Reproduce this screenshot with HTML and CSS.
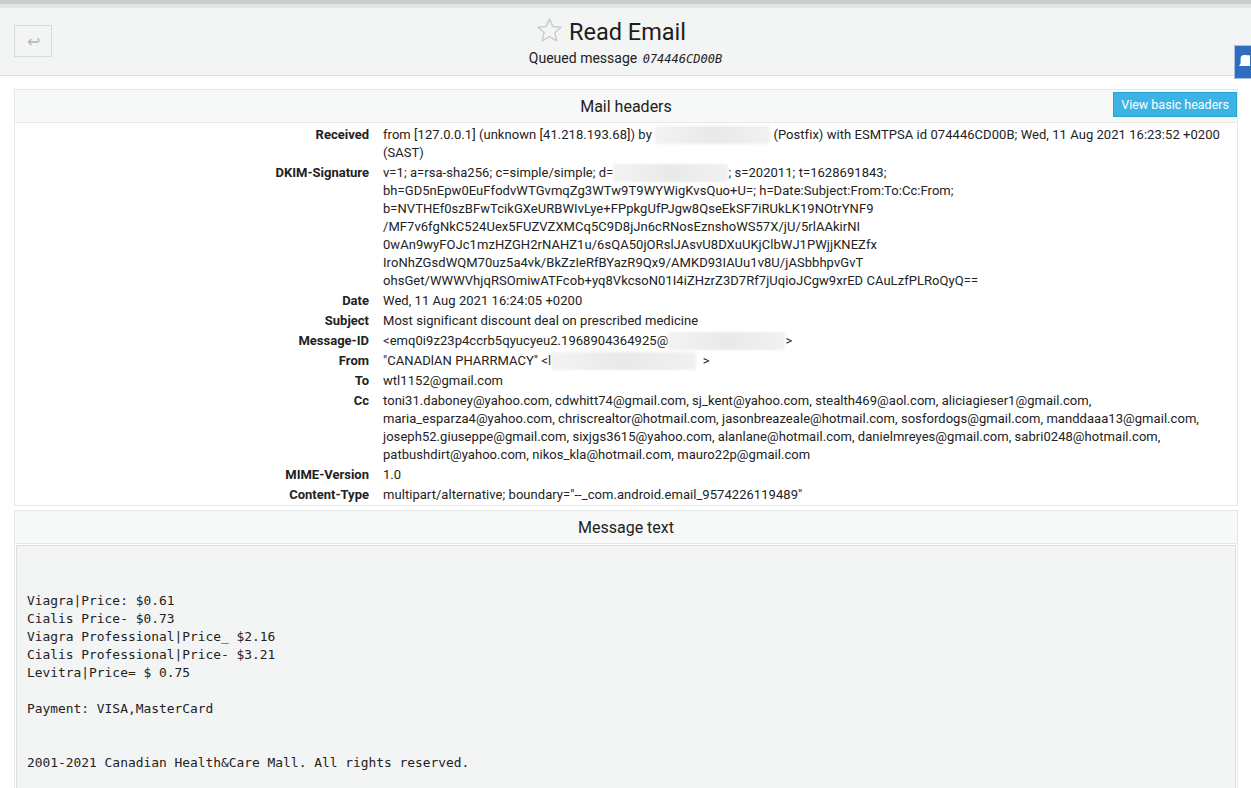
FILE: index.html
```html
<!DOCTYPE html>
<html lang="en">
<head>
  <meta charset="UTF-8">
  <meta name="viewport" content="width=device-width, initial-scale=1.0">
  <title>Read Email</title>
  <link rel="stylesheet" href="styles.css">
</head>
<body>
  <div class="top-strip"></div>
  <div class="page-header">
    <button class="back-btn">&#8617;</button>
    <div class="title-block">
      <h1 class="title">
        <svg class="star" width="29" height="29" viewBox="0 0 24 24"><path d="M12 2.4l2.8 6.3 6.8.6-5.2 4.5 1.6 6.7L12 17l-6 3.5 1.6-6.7-5.2-4.5 6.8-.6z" fill="none" stroke="#c9cbcc" stroke-width="1.2" stroke-linejoin="round"/></svg>
        Read Email
      </h1>
      <div class="subtitle">Queued message <span class="qid">074446CD00B</span></div>
    </div>
  </div>
  <div class="side-tab">
    <svg width="16" height="32" viewBox="0 0 16 32"><path d="M9 9c-2.2 0-3.4 1.7-3.4 3.8v4.4L4 20h11V9.5C14 9.2 11 9 9 9z" fill="#fff"/></svg>
  </div>

  <div class="content">
    <div class="panel">
      <div class="panel-head">
        <span class="panel-title">Mail headers</span>
        <button class="btn-info">View basic headers</button>
      </div>
      <div class="headers">
        <div class="h-label">Received</div>
        <div class="h-value">from [127.0.0.1] (unknown [41.218.193.68]) by <span class="redact" style="width:115px"></span> (Postfix) with ESMTPSA id 074446CD00B; Wed, 11 Aug 2021 16:23:52 +0200 (SAST)</div>

        <div class="h-label">DKIM-Signature</div>
        <div class="h-value">v=1; a=rsa-sha256; c=simple/simple; d=<span class="redact" style="width:115px"></span>; s=202011; t=1628691843;<br>bh=GD5nEpw0EuFfodvWTGvmqZg3WTw9T9WYWigKvsQuo+U=; h=Date:Subject:From:To:Cc:From;<br>b=NVTHEf0szBFwTcikGXeURBWIvLye+FPpkgUfPJgw8QseEkSF7iRUkLK19NOtrYNF9<br>/MF7v6fgNkC524Uex5FUZVZXMCq5C9D8jJn6cRNosEznshoWS57X/jU/5rlAAkirNI<br>0wAn9wyFOJc1mzHZGH2rNAHZ1u/6sQA50jORslJAsvU8DXuUKjClbWJ1PWjjKNEZfx<br>IroNhZGsdWQM70uz5a4vk/BkZzIeRfBYazR9Qx9/AMKD93IAUu1v8U/jASbbhpvGvT<br>ohsGet/WWWVhjqRSOmiwATFcob+yq8VkcsoN01I4iZHzrZ3D7Rf7jUqioJCgw9xrED CAuLzfPLRoQyQ==</div>

        <div class="h-label">Date</div>
        <div class="h-value">Wed, 11 Aug 2021 16:24:05 +0200</div>

        <div class="h-label">Subject</div>
        <div class="h-value">Most significant discount deal on prescribed medicine</div>

        <div class="h-label">Message-ID</div>
        <div class="h-value">&lt;emq0i9z23p4ccrb5qyucyeu2.1968904364925@<span class="redact" style="width:117px"></span>&gt;</div>

        <div class="h-label">From</div>
        <div class="h-value">"CANADlAN PHARRMACY" &lt;l<span class="redact" style="width:145px"></span>&nbsp; &gt;</div>

        <div class="h-label">To</div>
        <div class="h-value">wtl1152@gmail.com</div>

        <div class="h-label">Cc</div>
        <div class="h-value">toni31.daboney@yahoo.com, cdwhitt74@gmail.com, sj_kent@yahoo.com, stealth469@aol.com, aliciagieser1@gmail.com,<br>maria_esparza4@yahoo.com, chriscrealtor@hotmail.com, jasonbreazeale@hotmail.com, sosfordogs@gmail.com, manddaaa13@gmail.com,<br>joseph52.giuseppe@gmail.com, sixjgs3615@yahoo.com, alanlane@hotmail.com, danielmreyes@gmail.com, sabri0248@hotmail.com,<br>patbushdirt@yahoo.com, nikos_kla@hotmail.com, mauro22p@gmail.com</div>

        <div class="h-label">MIME-Version</div>
        <div class="h-value">1.0</div>

        <div class="h-label">Content-Type</div>
        <div class="h-value">multipart/alternative; boundary="--_com.android.email_9574226119489"</div>
      </div>
    </div>

    <div class="panel">
      <div class="panel-head">
        <span class="panel-title">Message text</span>
      </div>
      <pre class="message">


Viagra|Price: $0.61
Cialis Price- $0.73
Viagra Professional|Price_ $2.16
Cialis Professional|Price- $3.21
Levitra|Price= $ 0.75

Payment: VISA,MasterCard


2001-2021 Canadian Health&amp;Care Mall. All rights reserved.
</pre>
    </div>
  </div>
</body>
</html>
```

FILE: styles.css
```css
body {
  margin: 0;
  background: #fff;
  font-family: Roboto, "Liberation Sans", sans-serif;
  font-size: 13px;
  color: #222;
}
.top-strip {
  height: 4px;
  background: #cbcccc;
  border-bottom: 4px solid #e4e5e5;
}
.page-header {
  position: relative;
  height: 67px;
  background: #f3f4f4;
  border-bottom: 1px solid #dcdddd;
}
.back-btn {
  position: absolute;
  left: 14px;
  top: 17px;
  width: 38px;
  height: 32px;
  background: #f3f4f4;
  border: 1px solid #dadbdb;
  color: #b5b7b8;
  font-size: 16px;
  padding: 0;
}
.title-block {
  text-align: center;
  padding-top: 9px;
}
.title {
  position: relative;
  left: 2px;
  margin: 0;
  font-size: 23.5px;
  font-weight: 400;
  line-height: 30px;
  display: inline-block;
  color: #1e1e1e;
}
.star {
  position: absolute;
  left: -34px;
  top: -1px;
}
.subtitle {
  font-size: 14px;
  line-height: 20px;
  margin-top: 1px;
}
.qid {
  font-family: "DejaVu Sans Mono", monospace;
  font-style: italic;
  font-size: 12px;
  margin-left: 2px;
}
.side-tab {
  position: absolute;
  right: 0;
  top: 45px;
  width: 16px;
  height: 32px;
  background: #2f6dc1;
  border: 1px solid #a9c0e0;
  border-right: none;
}
.content {
  padding: 13px 13px 0 14px;
  display: flex;
  flex-direction: column;
  gap: 4px;
}
.panel {
  border: 1px solid #e6e7e7;
  background: #fff;
}
.panel-head {
  position: relative;
  height: 32px;
  background: #f7f8f8;
  border-bottom: 1px solid #e6e7e7;
  display: flex;
  align-items: center;
  justify-content: center;
}
.panel-title {
  font-size: 16px;
}
.btn-info {
  position: absolute;
  right: 0;
  top: 2px;
  height: 25px;
  padding: 0 7px;
  background: #3bb4e5;
  border: 1px solid #2ba0d2;
  color: #fff;
  font-family: Roboto, "Liberation Sans", sans-serif;
  font-size: 12.5px;
}
.headers {
  display: grid;
  grid-template-columns: 354px 1fr;
  column-gap: 14px;
  padding: 2px 4px 0 0;
  line-height: 18px;
  letter-spacing: 0.05px;
}
.h-label {
  text-align: right;
  font-weight: 700;
  padding: 1px 0;
  letter-spacing: 0;
}
.h-value {
  padding: 1px 0;
}
.redact {
  display: inline-block;
  height: 18px;
  vertical-align: top;
  background: linear-gradient(90deg, #f3f3f3, #e9e9e9 50%, #f1f1f1);
  filter: blur(1px);
}
.message {
  margin: 1px;
  padding: 10px 10px 40px;
  background: #f3f4f4;
  border: 1px solid #dcdddd;
  font-family: "DejaVu Sans Mono", monospace;
  font-size: 12.9px;
  line-height: 18px;
  color: #222;
}
```
